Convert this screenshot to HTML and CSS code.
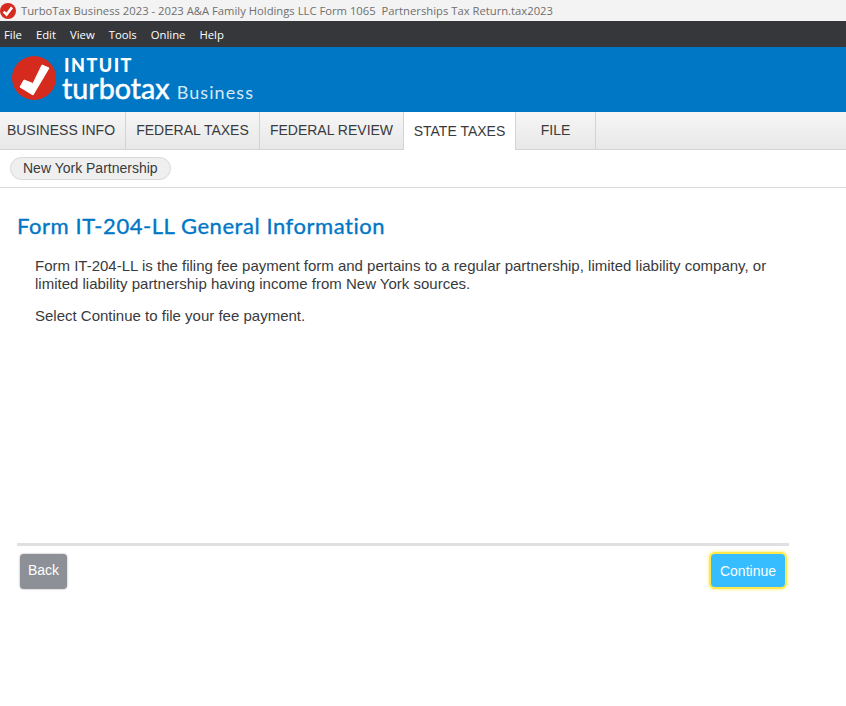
FILE: index.html
```html
<!DOCTYPE html>
<html lang="en">
<head>
<meta charset="utf-8">
<title>TurboTax Business 2023</title>
<link rel="stylesheet" href="styles.css">
</head>
<body>
<div class="titlebar">
  <svg class="title-icon" viewBox="0 0 16 16"><circle cx="8" cy="8" r="8" fill="#d52b1e"/><path d="M3.6 8.6l3 3L12 4.400" fill="none" stroke="#fff" stroke-width="2.600"/></svg>
  <span class="title-text">TurboTax Business 2023 - 2023 A&amp;A Family Holdings LLC Form 1065&nbsp; Partnerships Tax Return.tax2023</span>
</div>
<nav class="menubar">
  <span>File</span><span>Edit</span><span>View</span><span>Tools</span><span>Online</span><span>Help</span>
</nav>
<header class="banner">
  <svg class="logo-mark" viewBox="0 0 44 44"><circle cx="22" cy="22" r="22" fill="#d52b1e"/><path d="M8 31L12 24L21 27.500L30 9L37 12L21 39Z" fill="#fff" stroke="#fff" stroke-width="1" stroke-linejoin="round"/></svg>
  <div class="logo-text">
    <div class="logo-intuit">INTUIT</div>
    <div class="logo-product"><span class="logo-turbotax">turbotax</span><span class="logo-business">Business</span></div>
  </div>
</header>
<div class="tabs">
  <div class="tab tab-1">BUSINESS INFO</div>
  <div class="tab tab-2">FEDERAL TAXES</div>
  <div class="tab tab-3">FEDERAL REVIEW</div>
  <div class="tab tab-4 active">STATE TAXES</div>
  <div class="tab tab-5">FILE</div>
</div>
<div class="subnav"><span class="pill">New York Partnership</span></div>
<main class="content">
  <h1>Form IT-204-LL General Information</h1>
  <div class="copy">
    <p>Form IT-204-LL is the filing fee payment form and pertains to a regular partnership, limited liability company, or limited liability partnership having income from New York sources.</p>
    <p>Select Continue to file your fee payment.</p>
  </div>
  <div class="actions">
    <button class="btn back">Back</button>
    <button class="btn continue">Continue</button>
  </div>
</main>
</body>
</html>
```
FILE: styles.css
```css
* { box-sizing: border-box; }
html, body { margin: 0; height: 100%; overflow: hidden; }
body { background: #fff; font-family: "Liberation Sans", Arial, sans-serif; color: #393a3d; }

.titlebar { height: 21px; background: #f3f3f3; display: flex; align-items: center; gap: 5px; }
.title-icon { width: 16px; height: 16px; display: block; }
.title-text { font: 11.26px "Open Sans", sans-serif; color: #6f6f6f; white-space: pre; }

.menubar { height: 26px; background: #36373b; display: flex; align-items: center; padding-left: 4px; gap: 14px; font: 11.300px "Open Sans", sans-serif; color: #fff; }

.banner { height: 65px; background: #0077c5; display: flex; padding: 9px 0 0 12px; gap: 6px; color: #fff; }
.logo-mark { width: 44px; height: 44px; flex: none; }
.logo-text { display: flex; flex-direction: column; }
.logo-intuit { font: 900 18px/16px "Lato", sans-serif; letter-spacing: 1.500px; margin: 1px 0 0 2px; }
.logo-product { display: flex; align-items: baseline; gap: 7px; }
.logo-turbotax { font: 400 28.700px/30px "Lato", sans-serif; -webkit-text-stroke: .5px #fff; }
.logo-business { font: 18px/20px "Lato", sans-serif; color: #d6e9f6; letter-spacing: 1.100px; }

.tabs { height: 38px; display: flex; background: linear-gradient(#f6f6f6, #e8e8e8); border-bottom: 1px solid #d4d4d4; }
.tab { height: 37px; display: flex; align-items: center; justify-content: center; font-size: 14px; border-right: 1px solid #d4d4d4; padding-bottom: 2px; }
.tab-1 { width: 126px; padding-right: 3px; }
.tab-2 { width: 134px; }
.tab-3 { width: 144px; }
.tab-4 { width: 112px; }
.tab-5 { width: 80px; }
.tab.active { height: 38px; background: #fff; padding-bottom: 0; border-bottom: 0; }

.subnav { height: 38px; border-bottom: 1px solid #dcdcdc; padding: 7px 0 0 10px; }
.pill { display: inline-block; height: 23px; padding: 0 12px; line-height: 21px; background: #efefef; border: 1px solid #d8d8d8; border-radius: 12px; font-size: 14px; }

.content { width: 789px; padding: 0 0 0 17px; }
h1 { margin: 24px 0 0; font: 400 22px/28px "Lato", sans-serif; letter-spacing: .55px; -webkit-text-stroke: .35px #0077c5; color: #0077c5; }
.copy { height: 303px; padding: 17px 0 0 18px; font-size: 15px; line-height: 18px; }
.copy p { margin: 0 0 14px; width: 745px; }

.actions { border-top: 3px solid #e0e0e0; display: flex; justify-content: space-between; padding: 8px 4px 0 3px; }
.btn { height: 35px; border-radius: 4px; font: 14px "Liberation Sans", Arial, sans-serif; color: #fff; padding: 0; }
.back { width: 47px; background: #8d9096; border: 0; box-shadow: 0 0 2px #999; padding-bottom: 4px; }
.continue { width: 74px; height: 33px; background: #35bdff; border: 0; box-shadow: 0 0 0 2px #ffe94a, 0 0 3px 3px #fff2a0; }
```
